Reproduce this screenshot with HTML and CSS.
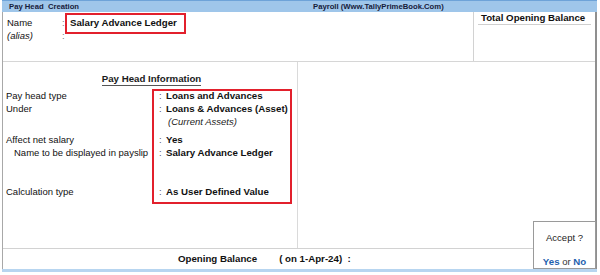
FILE: index.html
```html
<!DOCTYPE html>
<html>
<head>
<meta charset="utf-8">
<title>Pay Head Creation</title>
<link rel="stylesheet" href="styles.css">
</head>
<body>
<div class="app">
  <div class="titlebar">
    <span class="title-left">Pay Head&nbsp; Creation</span>
    <span class="title-center">Payroll (Www.TallyPrimeBook.Com)</span>
  </div>
  <div class="frame">
    <div class="top">
      <div class="namebox">
        <div class="namerow">
          <span class="nlabel">Name</span><span class="ncolon">:</span><span class="bold">Salary Advance Ledger</span>
        </div>
        <div class="namerow">
          <span class="nlabel italic">(alias)</span><span class="ncolon">:</span>
        </div>
        <div class="redbox redbox-name"></div>
      </div>
      <div class="totalbox">
        <div class="total-head">Total Opening Balance</div>
      </div>
    </div>
    <div class="main">
      <div class="leftcol">
        <div class="info-head-wrap"><span class="info-head">Pay Head Information</span></div>
        <div class="row"><span class="label">Pay head type</span><span class="colon">:</span><span class="bold">Loans and Advances</span></div>
        <div class="row"><span class="label">Under</span><span class="colon">:</span><span class="bold">Loans &amp; Advances (Asset)</span></div>
        <div class="row"><span class="label"></span><span class="colon"></span><span class="italic sub">(Current Assets)</span></div>
        <div class="row gap-sm"><span class="label">Affect net salary</span><span class="colon">:</span><span class="bold">Yes</span></div>
        <div class="row"><span class="label indent">Name to be displayed in payslip</span><span class="colon">:</span><span class="bold">Salary Advance Ledger</span></div>
        <div class="row gap-lg"><span class="label">Calculation type</span><span class="colon">:</span><span class="bold">As User Defined Value</span></div>
        <div class="redbox redbox-info"></div>
      </div>
      <div class="rightcol"></div>
    </div>
    <div class="footer">
      <span class="bold">Opening Balance</span><span class="bold on-date">( on 1-Apr-24) &nbsp;:</span>
    </div>
  </div>
  <div class="bottombar"></div>
  <div class="accept">
    <div class="accept-q">Accept ?</div>
    <div class="accept-a"><span class="yn">Yes</span> or <span class="yn">No</span></div>
  </div>
</div>
</body>
</html>
```

FILE: styles.css
```css
html, body {
  margin: 0;
  padding: 0;
  background: #ffffff;
}
body {
  font-family: "Liberation Sans", Arial, sans-serif;
  font-size: 9.5px;
  color: #111111;
}
.app {
  position: relative;
  margin-left: 2px;
  width: 595px;
}
.titlebar {
  height: 11px;
  background: #9fc6ea;
  border-top: 1px solid #6ea3d8;
  display: flex;
  align-items: center;
  font-weight: bold;
  font-size: 7.7px;
  color: #17203a;
}
.title-left {
  width: 304px;
  padding-left: 7px;
  white-space: pre;
}
.frame {
  border-left: 1px solid #a8a8a8;
  border-right: 2px solid #8f8f8f;
}
.top {
  height: 49px;
  display: flex;
  border-bottom: 1px solid #d6d6d6;
}
.namebox {
  position: relative;
  flex: 1;
  padding-left: 4px;
  padding-top: 4px;
}
.namerow {
  display: flex;
  line-height: 13px;
  height: 13px;
}
.nlabel {
  width: 55px;
}
.ncolon {
  width: 8px;
  color: #777;
}
.bold {
  font-weight: bold;
  font-size: 9.7px;
}
.italic {
  font-style: italic;
}
.redbox {
  position: absolute;
  border: 2px solid #e2202c;
  box-sizing: border-box;
}
.redbox-name {
  left: 62px;
  top: 1px;
  width: 121px;
  height: 21px;
}
.totalbox {
  width: 122px;
  box-sizing: border-box;
  border-left: 1px solid #d2d2d2;
  padding: 0 4px 0 4px;
}
.total-head {
  font-weight: bold;
  font-size: 9.7px;
  line-height: 11px;
  padding: 0 0 1px 3px;
  border-bottom: 1px solid #cfcfcf;
}
.main {
  height: 186px;
  display: flex;
}
.leftcol {
  position: relative;
  width: 295px;
  border-right: 1px solid #dadada;
  padding-left: 3px;
  box-sizing: border-box;
}
.rightcol {
  flex: 1;
}
.info-head-wrap {
  text-align: center;
  padding-top: 11px;
  height: 13px;
  margin-bottom: 3px;
}
.info-head {
  display: inline-block;
  font-weight: bold;
  font-size: 9.7px;
  line-height: 12px;
  border-bottom: 1px solid #555;
  color: #1a1a1a;
}
.row {
  display: flex;
  line-height: 13px;
  height: 13px;
}
.gap-sm {
  margin-top: 4.5px;
}
.gap-lg {
  margin-top: 26px;
}
.label {
  width: 153px;
  white-space: nowrap;
}
.indent {
  padding-left: 8px;
  box-sizing: border-box;
}
.colon {
  width: 7px;
  color: #555;
}
.sub {
  padding-left: 2px;
  color: #222;
}
.redbox-info {
  left: 149px;
  top: 27px;
  width: 140px;
  height: 115px;
}
.footer {
  border-top: 1px solid #d2d2d2;
  height: 17px;
  padding-top: 3px;
  line-height: 13px;
  padding-left: 175px;
  display: flex;
}
.on-date {
  margin-left: 22px;
  white-space: pre;
}
.bottombar {
  height: 3px;
  background: #b7d5f0;
}
.accept {
  position: absolute;
  left: 531px;
  top: 221px;
  width: 63px;
  height: 48px;
  box-sizing: border-box;
  border: 1px solid #9a9a9a;
  background: #ffffff;
  text-align: center;
  padding-top: 9px;
  line-height: 13px;
}
.accept-q {
  color: #222;
}
.accept-a {
  margin-top: 11px;
  color: #333;
}
.yn {
  font-weight: bold;
  font-size: 9.7px;
  color: #1f5fae;
}
```
